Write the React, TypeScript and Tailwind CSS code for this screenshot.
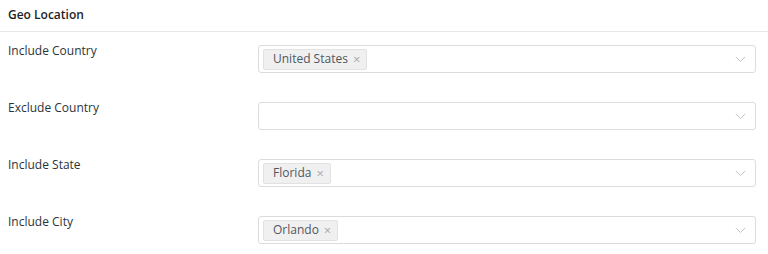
const rows = [
  { label: 'Include Country', value: 'United States' },
  { label: 'Exclude Country', value: '' },
  { label: 'Include State', value: 'Florida' },
  { label: 'Include City', value: 'Orlando' },
];

const Chevron = () => (
  <svg width="11" height="7" viewBox="0 0 11 7" fill="none" className="shrink-0">
    <path d="M0.8 0.8 L5.5 5.5 L10.2 0.8" stroke="#c3c4c7" strokeWidth="1" />
  </svg>
);

const TagSelect = ({ value }: { value: string }) => (
  <div className="flex h-[28px] items-center justify-between rounded-[3px] border border-[#dcdcde] bg-white pl-1 pr-[9px]">
    <div className="flex items-center">
      {value && (
        <span className="flex h-[21px] items-center gap-[5px] rounded-[2px] border border-[#e2e2e2] bg-[#f0f0f1] pl-[9px] pr-[6px] text-[12px] text-[#50575e]">
          {value}
          <span className="text-[13px] leading-none text-[#a7aaad]">×</span>
        </span>
      )}
    </div>
    <Chevron />
  </div>
);

export default function App() {
  return (
    <div className="w-[768px] h-[254px] bg-white" style={{ fontFamily: '"Open Sans", "Noto Sans", sans-serif' }}>
      <div className="flex h-[32px] items-center border-b border-[#e8e8e8] px-2 pb-[2px]">
        <h3 className="text-[12px] font-semibold text-[#1d2327]">Geo Location</h3>
      </div>
      {rows.map((row) => (
        <div key={row.label} className="flex h-[57px] pl-2 pr-3">
          <label className="w-[250px] pt-[11px] text-[12px] leading-[16px] text-[#2c3338]">
            {row.label}
          </label>
          <div className="flex-1 pt-[13px]">
            <TagSelect value={row.value} />
          </div>
        </div>
      ))}
    </div>
  );
}
